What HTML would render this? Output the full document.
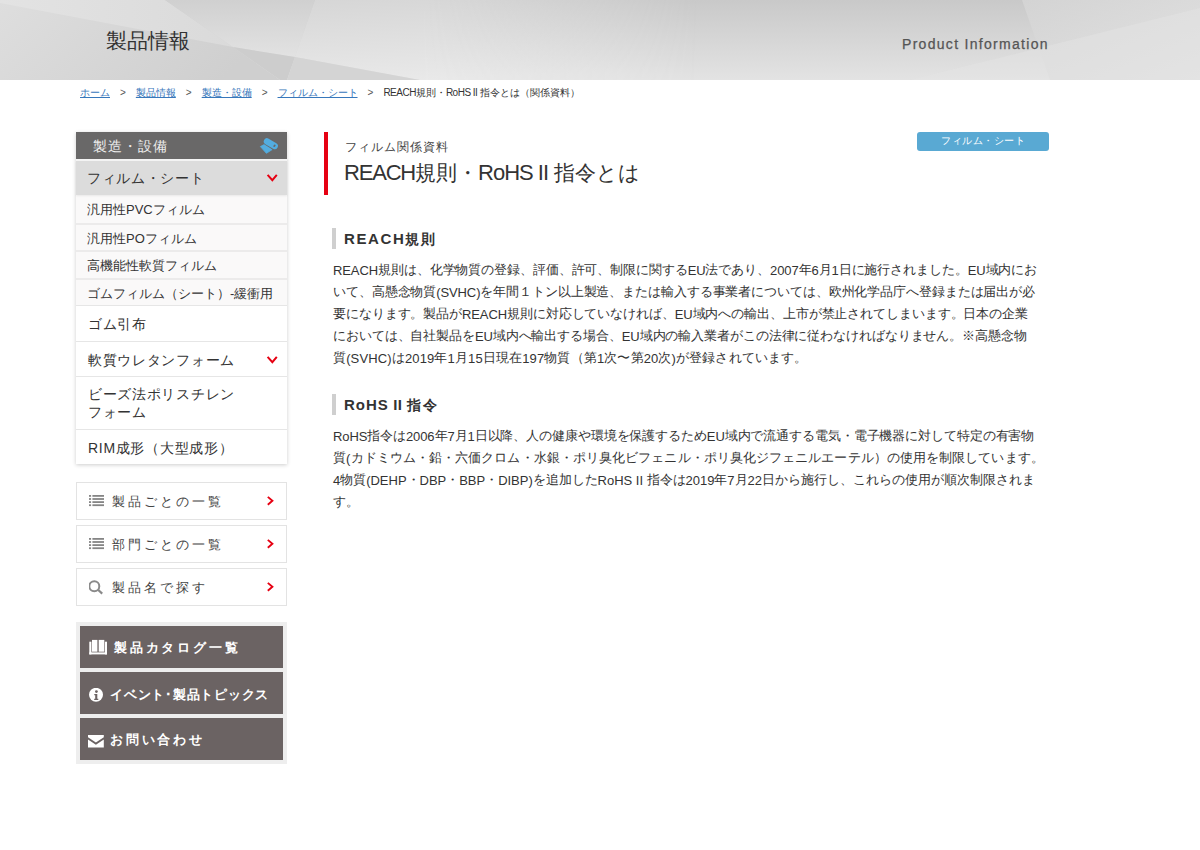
<!DOCTYPE html>
<html lang="ja">
<head>
<meta charset="utf-8">
<style>
*{box-sizing:border-box;margin:0;padding:0}
html,body{width:1200px;height:850px;overflow:hidden;background:#fff}
body{font-family:"Liberation Sans",sans-serif;color:#333;position:relative}
.abs{position:absolute}
#hdr{left:0;top:0;width:1200px;height:80px;overflow:hidden}
#hdr svg{position:absolute;left:0;top:0}
#ttl{left:106px;top:26px;font-size:21px;color:#333;font-weight:300;white-space:nowrap;line-height:28px}
#en{left:902px;top:36px;font-size:14px;font-weight:normal;color:#555;letter-spacing:1.3px;-webkit-text-stroke:.25px #555;white-space:nowrap;line-height:16px}
#bc{left:80px;top:86px;font-size:10px;white-space:nowrap;line-height:14px;color:#333}
#bc a{color:#3777bb;text-decoration:underline}
#bc .sep{display:inline-block;margin:0 10px;color:#555}
/* sidebar */
#side{left:76px;top:132px;width:211px}
.nav{box-shadow:0 1px 4px rgba(0,0,0,.2)}
.nh{height:27px;background:#696868;color:#eee;font-size:14px;letter-spacing:1px;padding-left:17px;line-height:29px;position:relative}
.ngap{height:2px;background:#f4f4f4}
.ncur{height:34px;background:#dcdcdc;box-shadow:0 1px 2px rgba(0,0,0,.07);z-index:1;font-size:14px;letter-spacing:.7px;padding-left:11px;line-height:35px;color:#333;position:relative}
.sub{height:27.5px;padding-top:1px;background:#faf9f9;border-top:2px solid #ecebeb;font-size:13px;padding-left:11px;line-height:26px;color:#333;white-space:nowrap}
.sub.first{border-top:none;padding-top:2px}
.it{background:#fff;border-top:1px solid #e6e6e6;font-size:14px;letter-spacing:.7px;padding-left:12px;padding-top:1px;color:#333;position:relative;white-space:nowrap}
.chev{position:absolute;left:190px;width:12px;height:9px}
.btn{position:absolute;left:0;width:211px;height:38px;border:1px solid #e3e3e3;background:#fff;font-size:13px;letter-spacing:3px;color:#444;line-height:37px;padding-left:35px;white-space:nowrap}
.btn svg{position:absolute}
.dbox{position:absolute;left:0;top:490px;width:211px;height:142px;background:#eeeeee}
.db{position:absolute;left:4px;width:203px;height:42px;background:#6b6363;color:#fff;font-weight:bold;font-size:13px;letter-spacing:3px;line-height:44px;padding-left:33px;white-space:nowrap}
.db svg{position:absolute}
/* main */
#redbar{left:324px;top:132px;width:4px;height:63px;background:#e60012}
#cat{left:345px;top:138px;font-size:12px;letter-spacing:1px;line-height:18px;color:#444;white-space:nowrap}
#h1{left:344px;top:158px;font-size:21px;line-height:30px;color:#333;white-space:nowrap}
#badge{left:917px;top:132px;width:132px;height:19px;border-radius:3px;background:#59a9d3;color:#fff;font-size:10px;letter-spacing:.5px;text-align:center;line-height:18px;text-indent:.5px;white-space:nowrap}
.h3bar{position:absolute;left:332px;width:4px;height:21px;background:#cfcfcf}
.h3{position:absolute;left:344px;font-size:14px;font-weight:bold;letter-spacing:2px;color:#333;white-space:nowrap;line-height:20px}
.h3 .l3{font-size:15px;letter-spacing:1.6px}
.p{position:absolute;left:333px;font-size:13px;line-height:22px;color:#333;white-space:nowrap;letter-spacing:-.1px}
.p i{font-style:normal;position:relative;top:1px}
.l{letter-spacing:-1.5px;font-size:22px}
</style>
</head>
<body>
<div id="hdr" class="abs">
<svg width="1200" height="80" viewBox="0 0 1200 80">
<defs>
<linearGradient id="gv" x1="0" y1="0" x2="0" y2="1">
<stop offset="0" stop-color="#c9c9c9"/><stop offset="1" stop-color="#e3e3e3"/>
</linearGradient>
<linearGradient id="gl" x1="0" y1="0" x2="1" y2="0.3">
<stop offset="0" stop-color="#dedede"/><stop offset="1" stop-color="#cfcfcf"/>
</linearGradient>
<linearGradient id="gt" x1="0" y1="0" x2="1" y2="0">
<stop offset="0" stop-color="#e3e3e3"/><stop offset="1" stop-color="#dadada"/>
</linearGradient>
<linearGradient id="gm" x1="0" y1="0" x2="0" y2="1">
<stop offset="0" stop-color="#d0d0d0"/><stop offset="1" stop-color="#e2e2e2"/>
</linearGradient>
<linearGradient id="gr" x1="0" y1="0" x2="0.3" y2="1">
<stop offset="0" stop-color="#d6d6d6"/><stop offset="1" stop-color="#e9e9e9"/>
</linearGradient>
<linearGradient id="gright" x1="0" y1="0" x2="1" y2="0">
<stop offset="0" stop-color="#d8d8d8"/><stop offset="1" stop-color="#e2e2e2"/>
</linearGradient>
<linearGradient id="fade" gradientUnits="userSpaceOnUse" x1="420" y1="0" x2="700" y2="0">
<stop offset="0" stop-color="#fff"/><stop offset="1" stop-color="#000"/>
</linearGradient>
<mask id="mk"><rect width="1200" height="80" fill="url(#fade)"/></mask>
</defs>
<rect width="1200" height="80" fill="url(#gv)"/>
<polygon points="0,0 165,0 233,47 280,80 0,80" fill="url(#gl)"/>
<polygon points="0,0 165,0 233,47 0,3" fill="url(#gt)"/>
<polygon points="165,0 315,0 295,57 233,47" fill="url(#gm)"/>
<polygon points="315,0 760,0 760,80 420,80 295,57" fill="url(#gr)" mask="url(#mk)"/>
<polygon points="233,47 295,57 287,80 280,80" fill="#cdcdcd"/>
<polygon points="295,57 420,80 287,80" fill="#d4d4d4"/>
<polygon points="1022,0 1200,0 1200,80 1050,80" fill="url(#gright)" opacity=".7"/>
<polygon points="910,80 1200,8 1200,80" fill="#e4e4e4" opacity=".45"/>
</svg>
</div>
<div id="ttl" class="abs" style="margin-top:1px">製品情報</div>
<div id="en" class="abs">Product Information</div>

<div id="bc" class="abs"><a>ホーム</a><span class="sep">&gt;</span><a>製品情報</a><span class="sep">&gt;</span><a>製造・設備</a><span class="sep">&gt;</span><a>フィルム・シート</a><span class="sep">&gt;</span><span style="letter-spacing:-.5px">REACH</span>規則・<span style="letter-spacing:-.5px">RoHS II </span>指令とは（関係資料）</div>

<div id="side" class="abs">
 <div class="nav">
  <div class="nh">製造・設備
   <svg style="position:absolute;left:179px;top:2px" width="26" height="24" viewBox="0 0 26 24">
    <path d="M5.4 12.6 L9.8 10.2 L17.2 15.6 L11.4 19.3 Z" fill="#53ade0" stroke="#53ade0" stroke-width="0.8" stroke-linejoin="round"/>
    <path d="M12 7.4 L19.7 12" stroke="#696868" stroke-width="8" stroke-linecap="round"/>
    <path d="M12 7.4 L19.7 12" stroke="#53ade0" stroke-width="6.4" stroke-linecap="round"/>
    <ellipse cx="19.5" cy="11.8" rx="1.4" ry="0.95" transform="rotate(-55 19.5 11.8)" fill="#696868"/>
   </svg>
  </div>
  <div class="ngap"></div>
  <div class="ncur">フィルム・シート
   <svg class="chev" style="top:12px" viewBox="0 0 12 9"><path d="M1.6 1.8 L6.35 7.2 L10.8 1.9" stroke="#e60012" stroke-width="2" fill="none"/></svg>
  </div>
  <div class="sub first">汎用性PVCフィルム</div>
  <div class="sub">汎用性POフィルム</div>
  <div class="sub">高機能性軟質フィルム</div>
  <div class="sub">ゴムフィルム（シート）-緩衝用</div>
  <div class="it" style="height:36px;line-height:35px">ゴム引布</div>
  <div class="it" style="height:35px;line-height:34px">軟質ウレタンフォーム
   <svg class="chev" style="top:13px" viewBox="0 0 12 9"><path d="M1.6 1.8 L6.35 7.2 L10.8 1.9" stroke="#e60012" stroke-width="2" fill="none"/></svg>
  </div>
  <div class="it" style="height:53px;line-height:18px;padding-top:8px">ビーズ法ポリスチレン<br>フォーム</div>
  <div class="it" style="height:35px;line-height:34px">RIM成形（大型成形）</div>
 </div>

 <div class="btn" style="top:350px">
  <svg style="left:11.8px;top:11.8px" width="16" height="12" viewBox="0 0 16 12"><g fill="#858585"><rect x="0" y="0" width="2.1" height="1.8"/><rect x="3.4" y="0" width="11.6" height="1.8"/><rect x="0" y="3.1" width="2.1" height="1.8"/><rect x="3.4" y="3.1" width="11.6" height="1.8"/><rect x="0" y="6.2" width="2.1" height="1.8"/><rect x="3.4" y="6.2" width="11.6" height="1.8"/><rect x="0" y="9.3" width="2.1" height="1.8"/><rect x="3.4" y="9.3" width="11.6" height="1.8"/></g></svg>
  製品ごとの一覧
  <svg style="left:189px;top:12px" width="9" height="12" viewBox="0 0 9 12"><path d="M1.8 1.9 L6.4 5.8 L1.8 9.7" stroke="#e60012" stroke-width="1.9" fill="none"/></svg>
 </div>
 <div class="btn" style="top:393px">
  <svg style="left:11.8px;top:11.8px" width="16" height="12" viewBox="0 0 16 12"><g fill="#858585"><rect x="0" y="0" width="2.1" height="1.8"/><rect x="3.4" y="0" width="11.6" height="1.8"/><rect x="0" y="3.1" width="2.1" height="1.8"/><rect x="3.4" y="3.1" width="11.6" height="1.8"/><rect x="0" y="6.2" width="2.1" height="1.8"/><rect x="3.4" y="6.2" width="11.6" height="1.8"/><rect x="0" y="9.3" width="2.1" height="1.8"/><rect x="3.4" y="9.3" width="11.6" height="1.8"/></g></svg>
  部門ごとの一覧
  <svg style="left:189px;top:12px" width="9" height="12" viewBox="0 0 9 12"><path d="M1.8 1.9 L6.4 5.8 L1.8 9.7" stroke="#e60012" stroke-width="1.9" fill="none"/></svg>
 </div>
 <div class="btn" style="top:436px">
  <svg style="left:12px;top:10px" width="16" height="16" viewBox="0 0 16 16"><circle cx="5.3" cy="7.2" r="5" stroke="#8a8a8a" stroke-width="2" fill="none"/><path d="M9 10.8 L13.2 14.6" stroke="#8a8a8a" stroke-width="2.2"/></svg>
  製品名で探す
  <svg style="left:189px;top:12px" width="9" height="12" viewBox="0 0 9 12"><path d="M1.8 1.9 L6.4 5.8 L1.8 9.7" stroke="#e60012" stroke-width="1.9" fill="none"/></svg>
 </div>

 <div class="dbox">
  <div class="db" style="top:4px;padding-left:34px;letter-spacing:2.8px">
   <svg style="left:8.5px;top:13px" width="19" height="17" viewBox="0 0 19 17"><g fill="#fff"><rect x="0.3" y="2.7" width="2.1" height="12.7"/><rect x="0.3" y="13.4" width="17.7" height="2"/><rect x="15.9" y="2.7" width="2.1" height="12.7"/><rect x="3" y="0.9" width="5.4" height="11.8"/><rect x="9.7" y="0.9" width="5.6" height="11.8"/></g></svg>
   製品カタログ一覧</div>
  <div class="db" style="top:50px;padding-left:30px;letter-spacing:.75px;line-height:46px">
   <svg style="left:9px;top:15.5px" width="15" height="15" viewBox="0 0 15 15"><circle cx="7" cy="6.8" r="7" fill="#fff"/><path d="M5.3 6 H8.3 V10.8 H9.3 V12 H5.2 V10.8 H6.2 V7.2 H5.3 Z" fill="#6b6363"/><circle cx="7.4" cy="3.6" r="1.4" fill="#6b6363"/></svg>
   イベント･製品トピックス</div>
  <div class="db" style="top:96px;padding-left:30px;letter-spacing:2.75px">
   <svg style="left:7.5px;top:16.5px" width="16" height="13" viewBox="0 0 16 13"><path d="M0 0 H15.8 V2.2 L7.9 7.4 L0 2.2 Z" fill="#fff"/><path d="M0 4.6 L7.9 9.8 L15.8 4.6 V12.5 H0 Z" fill="#fff"/></svg>
   お問い合わせ</div>
 </div>
</div>

<div id="redbar" class="abs"></div>
<div id="cat" class="abs">フィルム関係資料</div>
<div id="h1" class="abs"><span class="l" style="letter-spacing:-1.2px">REACH</span>規則・<span class="l" style="letter-spacing:-1px">RoHS II</span>&nbsp;指令とは</div>
<div id="badge" class="abs">フィルム・シート</div>

<div class="h3bar" style="top:228px"></div>
<div class="h3" style="top:229px"><span class="l3">REACH</span>規則</div>
<div class="p" style="top:259px"><i>REACH</i>規則は、化学物質の登録、評価、許可、制限に関する<i>EU</i>法であり、<i>2007</i>年<i>6</i>月<i>1</i>日に施行されました。<i>EU</i>域内にお<br>いて、高懸念物質<i>(SVHC)</i>を年間１トン以上製造、または輸入する事業者については、欧州化学品庁へ登録または届出が必<br>要になります。製品が<i>REACH</i>規則に対応していなければ、<i>EU</i>域内への輸出、上市が禁止されてしまいます。日本の企業<br>においては、自社製品を<i>EU</i>域内へ輸出する場合、<i>EU</i>域内の輸入業者がこの法律に従わなければなりません。※高懸念物<br><span style="letter-spacing:.14px">質<i>(SVHC)</i>は<i>2019</i>年<i>1</i>月<i>15</i>日現在<i>197</i>物質（第<i>1</i>次〜第<i>20</i>次<i>)</i>が登録されています。</span></div>

<div class="h3bar" style="top:394px"></div>
<div class="h3" style="top:395px"><span class="l3" style="letter-spacing:1px">RoHS</span><span class="l3" style="letter-spacing:.3px"> II </span>指令</div>
<div class="p" style="top:425px"><i>RoHS</i>指令は<i>2006</i>年<i>7</i>月<i>1</i>日以降、人の健康や環境を保護するため<i>EU</i>域内で流通する電気・電子機器に対して特定の有害物<br><span style="letter-spacing:.08px">質<i>(</i>カドミウム・鉛・六価クロム・水銀・ポリ臭化ビフェニル・ポリ臭化ジフェニルエーテル）の使用を制限しています。</span><br><span style="letter-spacing:-.02px"><i>4</i>物質<i>(DEHP</i>・<i>DBP</i>・<i>BBP</i>・<i>DIBP)</i>を追加した<i>RoHS II</i> 指令は<i>2019</i>年<i>7</i>月<i>22</i>日から施行し、これらの使用が順次制限されま</span><br>す。</div>
</body>
</html>
